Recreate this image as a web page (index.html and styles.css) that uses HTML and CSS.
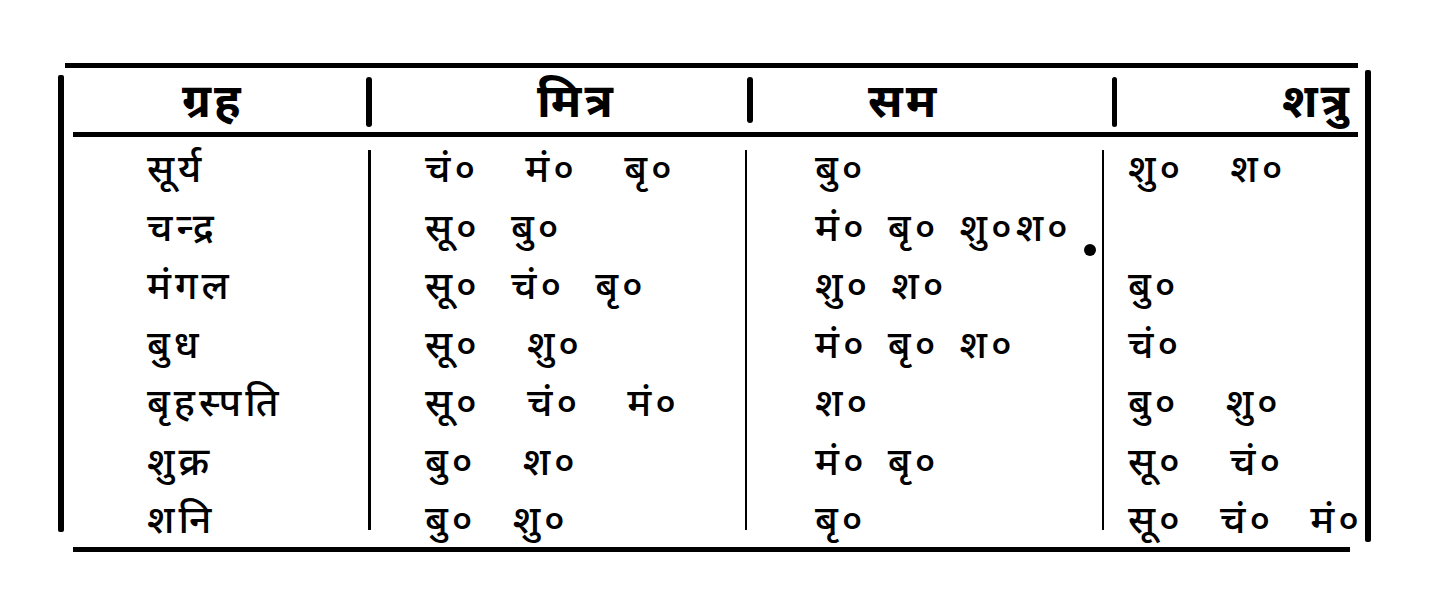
FILE: index.html
```html
<!DOCTYPE html>
<html lang="hi">
<head>
<meta charset="utf-8">
<title>ग्रह मैत्री</title>
<link rel="stylesheet" href="styles.css">
</head>
<body>
<div class="sheet">
  <div class="bar bar-left"></div>
  <div class="table">
    <div class="rule rule-top"></div>
    <div class="head">
      <div class="hcell h1">ग्रह</div>
      <div class="hdiv"></div>
      <div class="hcell h2">मित्र</div>
      <div class="hdiv hdiv-short"></div>
      <div class="hcell h3">सम</div>
      <div class="hdiv"></div>
      <div class="hcell h4">शत्रु</div>
    </div>
    <div class="rule rule-mid"></div>
    <div class="body">
      <div class="vdiv d1"></div>
      <div class="vdiv d2"></div>
      <div class="vdiv d3"></div>

      <div class="cell c1">सूर्य</div>
      <div class="cell c2 sp-w">चं० मं० बृ०</div>
      <div class="cell c3">बु०</div>
      <div class="cell c4 sp-w">शु० श०</div>

      <div class="cell c1">चन्द्र</div>
      <div class="cell c2 sp-m">सू० बु०</div>
      <div class="cell c3 sp-t blot-host">मं० बृ० शु०श०<span class="blot"></span></div>
      <div class="cell c4"></div>

      <div class="cell c1">मंगल</div>
      <div class="cell c2 sp-m">सू० चं० बृ०</div>
      <div class="cell c3 sp-t">शु० श०</div>
      <div class="cell c4">बु०</div>

      <div class="cell c1">बुध</div>
      <div class="cell c2 sp-w">सू० शु०</div>
      <div class="cell c3 sp-t">मं० बृ० श०</div>
      <div class="cell c4">चं०</div>

      <div class="cell c1">बृहस्पति</div>
      <div class="cell c2 sp-w">सू० चं० मं०</div>
      <div class="cell c3">श०</div>
      <div class="cell c4 sp-w">बु० शु०</div>

      <div class="cell c1">शुक्र</div>
      <div class="cell c2 sp-w">बु० श०</div>
      <div class="cell c3 sp-t">मं० बृ०</div>
      <div class="cell c4 sp-w">सू० चं०</div>

      <div class="cell c1">शनि</div>
      <div class="cell c2 sp-x">बु० शु०</div>
      <div class="cell c3">बृ०</div>
      <div class="cell c4 sp-x">सू० चं० मं०</div>
    </div>
    <div class="rule rule-bottom"></div>
  </div>
  <div class="bar bar-right"></div>
</div>
</body>
</html>
```
FILE: styles.css
```css
html, body {
  margin: 0;
  padding: 0;
  background: #ffffff;
}

body {
  color: #000000;
  font-family: "Noto Sans Devanagari", "Noto Serif Devanagari", "Lohit Devanagari", "Mukta", "FreeSans", "Noto Sans", sans-serif;
  width: 1449px;
  height: 602px;
  overflow: hidden;
}

.sheet {
  display: flex;
  align-items: flex-start;
  margin: 63px 0 0 58px;
}

.bar {
  background: #000;
  width: 6px;
  border-radius: 2px;
}

.bar-left {
  margin-top: 12px;
  height: 457px;
}

.bar-right {
  margin-left: 7px;
  margin-top: 7px;
  height: 472px;
}

.table {
  width: 1293px;
  margin-left: 1px;
}

.rule {
  background: #000;
  height: 5px;
}

.rule-mid {
  margin-left: 8px;
}

.rule-bottom {
  margin: 0 8px 0 8px;
}

.head {
  display: grid;
  grid-template-columns: 301px 6px 375px 6px 359px 5px 241px;
  height: 64px;
  font-weight: 700;
  font-size: 47px;
  letter-spacing: 3px;
}

.hcell {
  line-height: 64px;
  padding-top: 6px;
  white-space: nowrap;
}

.h1 { padding-left: 117px; }
.h2 { padding-left: 165px; }
.h3 { padding-left: 115px; }
.h4 { text-align: right; padding-right: 6px; }

.hdiv {
  background: #000;
  margin-top: 9px;
  height: 50px;
  border-radius: 3px;
}

.hdiv-short {
  height: 46px;
}

.body {
  display: grid;
  grid-template-columns: 303px 3px 374px 2px 355px 2px 254px;
  grid-template-rows: repeat(7, 58.57px);
  height: 410px;
  font-size: 39px;
  font-weight: 500;
  letter-spacing: 4px;
}

.cell {
  line-height: 58.57px;
  padding-top: 7px;
  white-space: nowrap;
}

.c1 { grid-column: 1; padding-left: 82px; }
.c2 { grid-column: 3; padding-left: 54px; }
.c3 { grid-column: 5; padding-left: 68px; }
.c4 { grid-column: 7; padding-left: 24px; }

.sp-w { word-spacing: 32px; }
.sp-m { word-spacing: 16px; }
.sp-t { word-spacing: 6px; }
.sp-x { word-spacing: 22px; }

.vdiv {
  grid-row: 1 / -1;
  background: #000;
  margin-top: 13px;
  height: 380px;
}

.d1 { grid-column: 2; }
.d2 { grid-column: 4; }
.d3 { grid-column: 6; }

.blot-host {
  position: relative;
}

.blot {
  position: absolute;
  left: 337px;
  top: 48px;
  width: 12px;
  height: 12px;
  border-radius: 50%;
  background: #000;
}
```
